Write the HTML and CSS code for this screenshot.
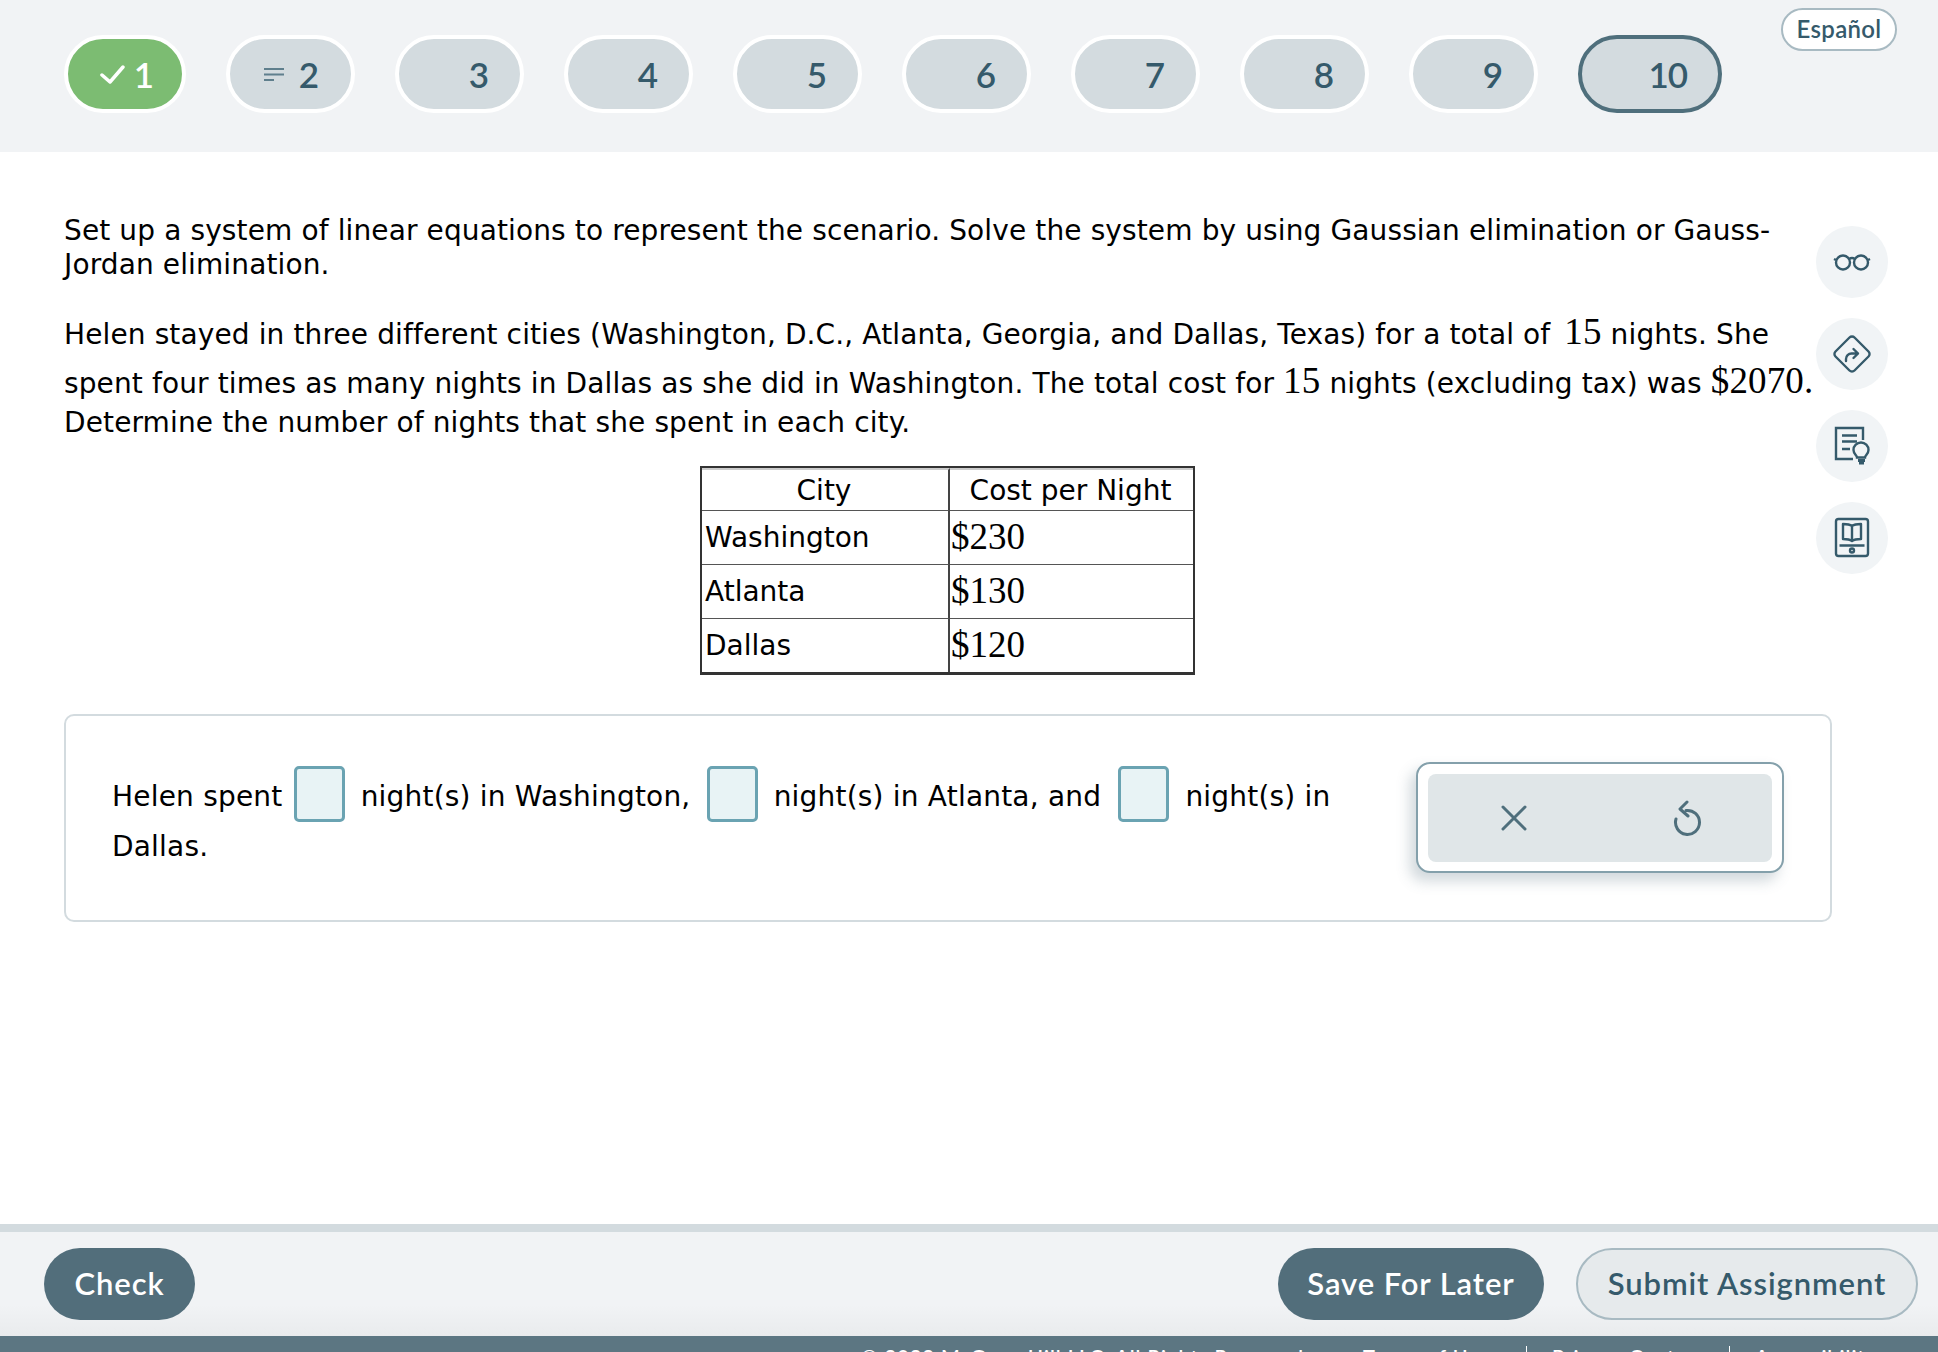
FILE: index.html
```html
<!DOCTYPE html>
<html lang="en">
<head>
<meta charset="utf-8">
<title>Assignment</title>
<link rel="stylesheet" href="styles.css">
</head>
<body>
<div class="page">
  <header class="topbar">
    <nav class="steps">
      <div class="step step-done">
        <svg class="step-check" width="25" height="19" viewBox="0 0 25 19"><path d="M2 10l8 7L23 2" fill="none" stroke="#fff" stroke-width="3.500" stroke-linecap="round" stroke-linejoin="round"/></svg>
        <span>1</span>
      </div>
      <div class="step step-note">
        <svg class="step-lines" width="20" height="14" viewBox="0 0 20 14"><path d="M0 1h20M0 6.500h20M0 12h10" stroke="#5f7f8d" stroke-width="2" fill="none"/></svg>
        <span>2</span>
      </div>
      <div class="step"><span>3</span></div>
      <div class="step"><span>4</span></div>
      <div class="step"><span>5</span></div>
      <div class="step"><span>6</span></div>
      <div class="step"><span>7</span></div>
      <div class="step"><span>8</span></div>
      <div class="step"><span>9</span></div>
      <div class="step step-current"><span>10</span></div>
    </nav>
    <button class="lang">Español</button>
  </header>

  <main class="content">
    <p class="intro">Set up a system of linear equations to represent the scenario. Solve the system by using Gaussian elimination or Gauss-Jordan elimination.</p>
    <p class="scenario">Helen stayed in three different cities (Washington, D.C., Atlanta, Georgia, and Dallas, Texas) for a total of <span class="math math-first">15</span> nights. She spent four times as many nights in Dallas as she did in Washington. The total cost for <span class="math math-spaced">15</span> nights (excluding tax) was <span class="math math-spaced">$2070.</span> Determine the number of nights that she spent in each city.</p>

    <table class="rates">
      <tr><th class="col-city">City</th><th class="col-cost">Cost per Night</th></tr>
      <tr><td>Washington</td><td class="num">$230</td></tr>
      <tr><td>Atlanta</td><td class="num">$130</td></tr>
      <tr class="row-last"><td>Dallas</td><td class="num">$120</td></tr>
    </table>

    <section class="answer">
      <div class="answer-text">Helen spent <span class="blank blank-first"></span> night(s) in Washington, <span class="blank"></span> night(s) in Atlanta, and <span class="blank blank-last"></span> night(s) in Dallas.</div>
      <div class="tools">
        <div class="tools-inner">
          <svg width="30" height="30" viewBox="0 0 30 30"><path d="M4 4l22 22M26 4L4 26" stroke="#4f6f7c" stroke-width="3" stroke-linecap="round" fill="none"/></svg>
          <svg width="30" height="36" viewBox="0 0 30 36"><path d="M4 19a12 12 0 1 0 10-8.500" stroke="#4f6f7c" stroke-width="3" stroke-linecap="round" fill="none"/><path d="M15 2l-7 7 8 7" stroke="#4f6f7c" stroke-width="3" stroke-linecap="round" stroke-linejoin="round" fill="none"/></svg>
        </div>
      </div>
    </section>

    <aside class="rail">
      <div class="rail-btn">
        <svg width="72" height="72" viewBox="0 0 72 72" fill="none" stroke="#355a6b" stroke-width="2.400"><circle cx="27" cy="36.500" r="7"/><circle cx="45" cy="36.500" r="7"/><path d="M33 33q3-2 6 0M20 34l-2-1M52 34l2-1"/></svg>
      </div>
      <div class="rail-btn">
        <svg width="72" height="72" viewBox="0 0 72 72" fill="none" stroke="#355a6b" stroke-width="2.400" stroke-linecap="round" stroke-linejoin="round"><path d="M33.500 19.500a3.500 3.500 0 0 1 5 0l14 14a3.500 3.500 0 0 1 0 5l-14 14a3.500 3.500 0 0 1-5 0l-14-14a3.500 3.500 0 0 1 0-5z"/><path d="M30 43v-2a5.500 5.500 0 0 1 5.500-5.500H42M37.500 31l4.500 4.500-4.500 4.500"/></svg>
      </div>
      <div class="rail-btn">
        <svg width="72" height="72" viewBox="0 0 72 72" fill="none" stroke="#355a6b" stroke-width="2.400"><path d="M47 30V18H20v31h17"/><path d="M26 25.500h15M26 31.500h15M26 39h8"/><path d="M41 47.500c0-2-3.500-3.500-3.500-7.500a7.500 7.500 0 0 1 15 0c0 4-3.500 5.500-3.500 7.500z"/><path d="M42 50.500h7M43 53h5" stroke-width="2.800"/></svg>
      </div>
      <div class="rail-btn">
        <svg width="72" height="72" viewBox="0 0 72 72" fill="none" stroke="#355a6b" stroke-width="2.400" stroke-linejoin="round"><rect x="20" y="17" width="32" height="37" rx="2.500"/><path d="M36 24c-2-1.500-5-2-9-2v15c4 0 7 .5 9 2 2-1.500 5-2 9-2V22c-4 0-7 .5-9 2zM36 24v15M23.500 43.500h25"/><circle cx="36" cy="48.500" r="2"/></svg>
      </div>
    </aside>
  </main>

  <div class="actions">
    <button class="btn btn-primary btn-check">Check</button>
    <div class="actions-right">
      <button class="btn btn-primary btn-save">Save For Later</button>
      <button class="btn btn-outline">Submit Assignment</button>
    </div>
  </div>

  <footer class="legal">
    <span class="legal-copy">© 2023 McGraw Hill LLC. All Rights Reserved.</span>
    <span class="legal-terms">Terms of Use</span>
    <span class="legal-privacy">Privacy Center</span>
    <span class="legal-access">Accessibility</span>
  </footer>
</div>
</body>
</html>
```
FILE: styles.css
```css
* { box-sizing: border-box; }
html, body { margin: 0; padding: 0; background: #fff; }
.page {
  width: 1938px;
  height: 1352px;
  display: flex;
  flex-direction: column;
  overflow: hidden;
  font-family: "DejaVu Sans", Verdana, sans-serif;
  color: #000;
}

/* top bar */
.topbar {
  height: 152px;
  flex: none;
  background: #f1f3f5;
  display: flex;
  justify-content: space-between;
  align-items: flex-start;
  padding: 35px 41px 0 64px;
  position: relative;
}
.steps { display: flex; gap: 40px; }
.step {
  width: 129px;
  height: 78px;
  border: 4px solid #fff;
  border-radius: 39px;
  background: #d3dbdf;
  display: flex;
  align-items: center;
  justify-content: flex-end;
  gap: 13px;
  padding-right: 31px;
  font-family: "Lato", sans-serif;
  font-size: 35px;
  font-weight: 600;
  color: #355a6b;
}
.step-done { width: 122px; background: #7cbc72; color: #fff; padding-right: 28px; gap: 9px; }
.step-note { gap: 15px; padding-right: 32px; }
.step-current { width: 144px; border-color: #4f6f7c; padding-right: 31px; letter-spacing: -1px; }
.step-check { display: block; }
.step-lines { display: block; margin-top: 2px; }
.lang {
  margin-top: -27px;
  width: 116px;
  height: 43px;
  border: 2px solid #a8bac2;
  border-radius: 22px;
  background: #fff;
  color: #355a6b;
  font-family: "Lato", sans-serif;
  font-size: 24px;
  font-weight: 600;
  letter-spacing: .3px;
  padding: 0 0 3px;
}

/* content */
.content {
  flex: 1;
  position: relative;
  padding: 62px 0 0 64px;
  font-size: 28px;
  line-height: 33px;
}
.intro { margin: 0 0 33px; width: 1765px; line-height: 34px; letter-spacing: .12px; }
.scenario { margin: 0; width: 1765px; letter-spacing: .12px; }
.math { font-family: "Liberation Serif", "Times New Roman", serif; font-size: 37px; }
.math-first { margin-left: 5px; }
.math-spaced { display: inline-block; padding: 13px 0 9px; line-height: 33px; }
.rates {
  width: 495px;
  margin: 27px 0 0 636px;
  border-collapse: separate;
  border-spacing: 0;
  border: 2px solid #333;
  border-bottom-width: 3px;
  font-size: 28px;
  table-layout: fixed;
}
.rates th, .rates td {
  padding: 0 0 0 3px;
  font-weight: 400;
  border-bottom: 1px solid #555;
  border-right: 2px solid #444;
  height: 54px;
}
.rates th { height: 43px; padding: 0 2px 0 0; text-align: center; border-top: 2px solid #ccc; }
.rates .row-last td { height: 53px; border-bottom: 0; }
.rates th:last-child, .rates td:last-child { border-right: 0; }
.rates .num { padding: 0 0 2px 1px; vertical-align: middle; }
.col-city { width: 248px; }
.num { font-family: "Liberation Serif", "Times New Roman", serif; font-size: 37px; }

.answer {
  width: 1768px;
  height: 208px;
  margin-top: 39px;
  border: 2px solid #d3dbdf;
  border-radius: 10px;
  display: flex;
  justify-content: space-between;
  padding: 46px 46px 0;
}
.answer-text { width: 1250px; margin-top: 4px; line-height: 50px; letter-spacing: .2px; }
.blank {
  display: inline-block;
  width: 51px;
  height: 56px;
  margin: 0 7px 0 7px;
  vertical-align: -16px;
  background: #e8f3f5;
  border: 3px solid #6aa3b2;
  border-radius: 5px;
}
.blank-first { margin-left: 2px; }
.blank-last { margin-left: 8px; }
.tools {
  width: 368px;
  height: 111px;
  flex: none;
  border: 2px solid #84a0ab;
  border-radius: 14px;
  background: #fff;
  padding: 10px;
  box-shadow: -6px 8px 14px rgba(70, 100, 115, .25);
}
.tools-inner {
  height: 88px;
  background: #e0e6e8;
  border-radius: 8px;
  display: flex;
  align-items: center;
  justify-content: space-between;
  padding: 0 70px 0 71px;
}

.rail {
  position: absolute;
  top: 74px;
  left: 1816px;
  display: flex;
  flex-direction: column;
  gap: 20px;
}
.rail-btn { width: 72px; height: 72px; border-radius: 50%; background: #f1f4f6; }
.rail-btn svg { display: block; }

/* actions */
.actions {
  height: 112px;
  flex: none;
  border-top: 8px solid #d3dbdf;
  background: linear-gradient(#f1f3f5 70%, #e9ebed);
  display: flex;
  justify-content: space-between;
  padding: 16px 20px 0 44px;
}
.actions-right { display: flex; gap: 32px; }
.btn {
  height: 72px;
  border-radius: 36px;
  font-family: "Lato", sans-serif;
  font-size: 31px;
  font-weight: 600;
  letter-spacing: .9px;
  border: 0;
  padding: 0 0 2px;
}
.btn-primary { background: #526e7b; color: #fff; }
.btn-check { width: 151px; }
.btn-save { width: 266px; }
.btn-outline { width: 342px; background: #e6eaec; color: #355a6b; border: 2px solid #a8bac2; }

/* legal */
.legal {
  height: 16px;
  flex: none;
  background: #5c7682;
  color: #fff;
  display: flex;
  align-items: flex-start;
  padding: 10px 0 0 861px;
  font-family: "Lato", sans-serif;
  font-size: 20px;
  font-weight: 600;
  letter-spacing: 1px;
  line-height: 20px;
  white-space: nowrap;
  overflow: hidden;
}
.legal-copy { width: 502px; }
.legal-terms { width: 163px; }
.legal-privacy { width: 203px; border-left: 1px solid #fff; padding-left: 25px; }
.legal-access { border-left: 1px solid #fff; padding-left: 25px; }
```
